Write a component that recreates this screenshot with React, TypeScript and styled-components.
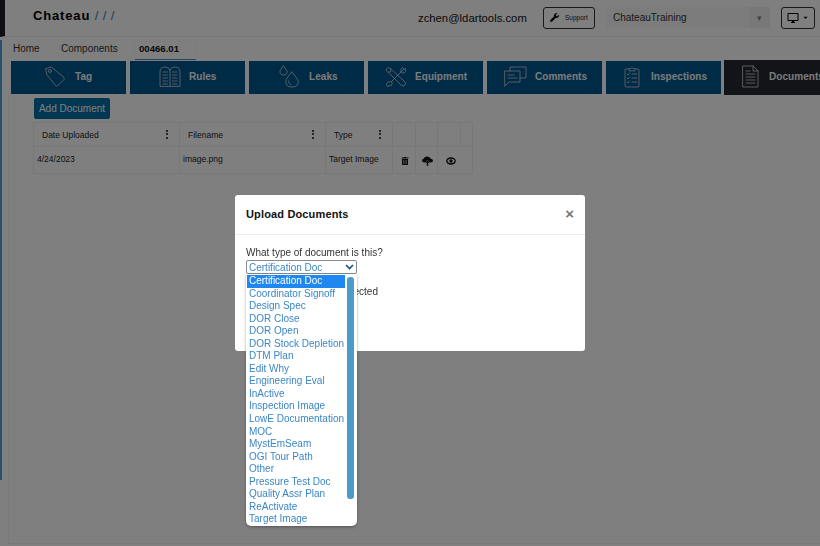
import styled, { createGlobalStyle } from 'styled-components'
import { FaWrench, FaTrashAlt, FaCaretDown } from 'react-icons/fa'
import { MdOutlineDesktopWindows } from 'react-icons/md'
import type { ReactNode } from 'react'

const GlobalStyle = createGlobalStyle`
  html, body { margin: 0; padding: 0; background: #fff; }
  body { font-family: "Liberation Sans", Arial, sans-serif; overflow: hidden; }
  * { box-sizing: border-box; }
`

const Page = styled.div`
  position: relative;
  width: 820px;
  height: 546px;
  overflow: hidden;
  background: #fff;
`

const Header = styled.header`
  display: flex;
  align-items: center;
  height: 37px;
  border-bottom: 1px solid #eee;
  border-left: 5px solid #1a1f2b;
  padding-left: 28px;
`

const Brand = styled.div`
  font-size: 13px;
  font-weight: 700;
  letter-spacing: 0.85px;
  color: #000;
  margin-bottom: 6px;
  width: 385px;
  flex: none;
  span { color: #2f7fb0; font-weight: 400; letter-spacing: 0.4px; }
`

const Email = styled.div`
  font-size: 11.3px;
  color: #111;
  width: 125px;
  flex: none;
`

const SupportButton = styled.div`
  display: flex;
  align-items: center;
  gap: 6px;
  width: 52px;
  height: 22px;
  margin-top: -1px;
  margin-right: 11px;
  padding-left: 6px;
  border: 1px solid #333;
  border-radius: 3px;
  font-size: 6.5px;
  color: #222;
  flex: none;
`

const TenantSelect = styled.div`
  display: flex;
  align-items: center;
  justify-content: space-between;
  width: 164px;
  height: 21px;
  margin-top: -1px;
  margin-right: 11px;
  padding-left: 7px;
  background: #f8f8f8;
  font-size: 10px;
  color: #333;
  flex: none;
`

const TenantCaret = styled.div`
  display: flex;
  align-items: center;
  justify-content: center;
  width: 21px;
  height: 21px;
  background: #f0f0f0;
  color: #888;
  font-size: 9px;
`

const ScreenButton = styled.div`
  display: flex;
  align-items: center;
  justify-content: center;
  gap: 3px;
  width: 34px;
  height: 22px;
  margin-top: -1px;
  border: 1px solid #333;
  border-radius: 3px;
  color: #000;
  flex: none;
`

const Breadcrumbs = styled.div`
  display: flex;
  align-items: flex-end;
  height: 23px;
  padding-left: 13px;
  font-size: 10px;
  color: #333;
`

const Crumb = styled.div<{ $width: number }>`
  width: ${p => p.$width}px;
  padding-bottom: 6px;
  flex: none;
`

const ActiveCrumb = styled.div`
  width: 61px;
  height: 18px;
  padding: 1px 0 0 4px;
  border-bottom: 1px solid #3c8dbc;
  background: #fff;
  box-shadow: 0 0 1px #ddd;
  font-weight: 700;
  font-size: 9.6px;
  color: #111;
  flex: none;
  align-self: flex-end;
`

const NavRow = styled.nav`
  display: flex;
  gap: 4px;
  padding-left: 11px;
  height: 35px;
`

const NavTab = styled.div<{ $active?: boolean; $gap: number; $iconLeft: number }>`
  display: flex;
  align-items: center;
  gap: ${p => p.$gap}px;
  flex: none;
  width: ${p => (p.$active ? 120 : 115)}px;
  height: ${p => (p.$active ? 35 : 33)}px;
  margin-top: ${p => (p.$active ? 0 : 1)}px;
  margin-left: ${p => (p.$active ? -1 : 0)}px;
  padding-left: ${p => p.$iconLeft}px;
  padding-bottom: ${p => (p.$active ? 3 : 2)}px;
  background: ${p => (p.$active ? '#25282f' : '#00568f')};
  color: #f4f6f8;
  font-size: 10px;
  font-weight: 700;
  letter-spacing: 0.05px;
  white-space: nowrap;
  overflow: hidden;
  svg { flex: none; }
`

const Content = styled.main`
  height: 449px;
  margin-left: 8px;
  padding: 3px 0 0 25px;
  border-left: 1px solid #f2f2f2;
  border-bottom: 1px solid #f2f2f2;
`

const AddButton = styled.div`
  display: flex;
  align-items: center;
  justify-content: center;
  width: 76px;
  height: 21px;
  margin-left: 0;
  background: #0070a8;
  border-radius: 2px;
  color: #fff;
  font-size: 10px;
`

const Table = styled.div`
  width: 440px;
  margin-top: 3px;
  margin-left: -1px;
  border: 1px solid #f0f0f0;
  font-size: 8.5px;
  color: #222;
`

const TableRow = styled.div<{ $height: number; $head?: boolean }>`
  display: grid;
  grid-template-columns: 146px 146px 67px 23px 22px 23px 1fr;
  height: ${p => p.$height}px;
  ${p => (p.$head ? 'border-bottom: 1px solid #f0f0f0;' : '')}
`

const HeadCell = styled.div<{ $pad?: number }>`
  display: flex;
  align-items: center;
  justify-content: space-between;
  padding: 0 ${p => p.$pad ?? 11}px 0 8px;
  border-right: 1px solid #f0f0f0;
  &:last-child { border-right: none; }
`

const BodyCell = styled.div<{ $center?: boolean; $bare?: boolean }>`
  display: flex;
  align-items: center;
  justify-content: ${p => (p.$center ? 'center' : 'flex-start')};
  padding-left: ${p => (p.$center ? 2 : 3)}px;
  padding-bottom: ${p => (p.$center ? 0 : 2)}px;
  padding-top: ${p => (p.$center ? 2 : 0)}px;
  ${p => (p.$bare ? '' : 'border-right: 1px solid #f0f0f0;')}
`

const Dots = styled.div`
  display: flex;
  flex-direction: column;
  gap: 1.5px;
  margin-top: -1px;
  i { width: 2px; height: 2px; border-radius: 50%; background: #111; display: block; }
`

const LeftRail = styled.div`
  position: absolute;
  left: 0;
  top: 40px;
  width: 2px;
  height: 440px;
  background: #4ea5dc;
`

const Backdrop = styled.div`
  position: fixed;
  inset: 0;
  background: rgba(0, 0, 0, 0.5);
`

const Modal = styled.section`
  position: absolute;
  left: 235px;
  top: 195px;
  width: 350px;
  height: 156px;
  background: #fff;
  border-radius: 3px;
`

const ModalHeader = styled.div`
  display: flex;
  align-items: center;
  justify-content: space-between;
  height: 40px;
  padding: 0 11px 2px;
  border-bottom: 1px solid #e9ecef;
`

const ModalTitle = styled.h2`
  margin: 0;
  font-size: 11px;
  font-weight: 700;
  letter-spacing: 0.15px;
  color: #111;
`

const CloseMark = styled.div`
  font-size: 15px;
  font-weight: 700;
  line-height: 1;
  color: #777;
`

const ModalBody = styled.div`
  position: relative;
  padding: 10px 11px 0;
  font-size: 10px;
  color: #333;
`

const Question = styled.div`
  line-height: 15px;
`

const SelectBox = styled.div`
  display: flex;
  align-items: center;
  justify-content: space-between;
  width: 111px;
  height: 14px;
  padding: 0 2px;
  border: 1px solid #8a8a8a;
  border-radius: 2px;
  color: #3a86c8;
`

const FileNote = styled.div`
  margin-top: 11px;
  width: 132px;
  text-align: right;
  color: #333;
  line-height: 14px;
`

const DropList = styled.ul`
  position: absolute;
  left: 246px;
  top: 274px;
  width: 111px;
  height: 252px;
  margin: 0;
  padding: 1px 0 0 1px;
  list-style: none;
  background: #fff;
  border-radius: 0 3px 5px 5px;
  box-shadow: 0 1px 3px rgba(0, 0, 0, 0.35);
`

const DropItem = styled.li<{ $selected?: boolean }>`
  width: 98px;
  height: 12.55px;
  padding-left: 2px;
  font-size: 10px;
  line-height: 12px;
  white-space: nowrap;
  color: ${p => (p.$selected ? '#fff' : '#3a86c8')};
  background: ${p => (p.$selected ? '#1e88f0' : 'transparent')};
`

const DropThumb = styled.div`
  position: absolute;
  left: 101px;
  top: 3px;
  width: 7px;
  height: 222px;
  border-radius: 3px;
  background: #4b9cc9;
`

const Line = (props: { children: ReactNode; w: number; h: number }) => (
  <svg
    width={props.w}
    height={props.h}
    viewBox={`0 0 ${props.w} ${props.h}`}
    fill="none"
    stroke="#bcc7d0"
    strokeWidth={0.9}
    strokeLinejoin="round"
    strokeLinecap="round"
  >
    {props.children}
  </svg>
)

const TagIcon = () => (
  <Line w={20} h={21}>
    <path d="M1 2.5 L6.5 1 L19 11.5 Q19.5 12.5 19 13.5 L12.5 20 Q11.5 20.5 10.5 19.5 L2 9 Z" />
    <circle cx="5" cy="5" r="1.5" />
  </Line>
)

const RulesIcon = () => (
  <Line w={22} h={21}>
    <path d="M1 20 V6 Q1 1 6 1 Q10.5 1 11 4.5 Q11.5 1 16 1 Q21 1 21 6 V20 Z" />
    <path d="M11 4.5 V20" />
    <path d="M4 6 H8.5 M4 9 H8.5 M4 12 H8.5 M4 15 H8.5 M4 18 H8.5 M13.5 6 H18 M13.5 9 H18 M13.5 12 H18 M13.5 15 H18 M13.5 18 H18" strokeDasharray="3 1" />
  </Line>
)

const LeaksIcon = () => (
  <Line w={21} h={23}>
    <path d="M4.5 1 L8 6 Q8.5 10 4.5 10 Q0.5 10 1 6 Z" />
    <path d="M13 7 L19 15 Q20.5 22 13 22 Q5.5 22 7 15 Z" />
    <path d="M9.5 16 Q9.5 19 12 20" />
  </Line>
)

const EquipmentIcon = () => (
  <Line w={22} h={22}>
    <path d="M3 6 L16 19 Q18 21 20 19 Q21.5 17 19 15 L6 3" />
    <path d="M1 4 L3 1.5 L6 3 L5.5 6 L3 6 Z" />
    <path d="M19 3 L6 16 Q3 15 1.5 17.5 Q1 20 3 21 L4.5 19 L6 20 Q8 18 7 16" />
    <path d="M16 6 Q15 3 17.5 1.5 L19 3.5 L20.5 2.5 Q21.5 6 19 7 Q17 7.5 16 6 Z" />
  </Line>
)

const CommentsIcon = () => (
  <Line w={23} h={21}>
    <path d="M1 5 H16 V16 H5 L1 20 Z" />
    <path d="M6 5 V1 H22 V12 H16" />
    <path d="M4 9 H10 M4 12 H13" />
  </Line>
)

const InspectionsIcon = () => (
  <Line w={16} h={22}>
    <path d="M4.5 3 H1.5 Q1 3 1 4 V20 Q1 21 2 21 H14 Q15 21 15 20 V4 Q15 3 14 3 H11.5" />
    <path d="M5 4.5 V2.5 H7 Q8 0.5 9 2.5 H11 V4.5 Z" />
    <path d="M3 8 L4 9 L5.5 7 M3 12 L4 13 L5.5 11 M3 16 L4 17 L5.5 15 M8 8 H13 M8 12 H13 M8 16 H13" />
  </Line>
)

const DocumentsIcon = () => (
  <Line w={17} h={23}>
    <path d="M1 1 H11 L16 6 V22 H1 Z" />
    <path d="M11 1 V6 H16" />
    <path d="M4 6 H8 M4 9 H13 M4 12 H13 M4 15 H13 M4 18 H13" />
  </Line>
)

const tabs = [
  { label: 'Tag', icon: <TagIcon />, gap: 10, left: 34 },
  { label: 'Rules', icon: <RulesIcon />, gap: 8, left: 29 },
  { label: 'Leaks', icon: <LeaksIcon />, gap: 9, left: 30 },
  { label: 'Equipment', icon: <EquipmentIcon />, gap: 8, left: 17 },
  { label: 'Comments', icon: <CommentsIcon />, gap: 8, left: 17 },
  { label: 'Inspections', icon: <InspectionsIcon />, gap: 11, left: 18 },
]

const docTypes = [
  'Certification Doc', 'Coordinator Signoff', 'Design Spec', 'DOR Close', 'DOR Open',
  'DOR Stock Depletion', 'DTM Plan', 'Edit Why', 'Engineering Eval', 'InActive',
  'Inspection Image', 'LowE Documentation', 'MOC', 'MystEmSeam', 'OGI Tour Path',
  'Other', 'Pressure Test Doc', 'Quality Assr Plan', 'ReActivate', 'Target Image',
]

const CloudDownIcon = () => (
  <svg width="11" height="10" viewBox="0 0 11 10" fill="#111">
    <path d="M2.5 6.5 Q0 6.5 0 4.6 Q0 3 1.8 2.8 Q2.4 0.5 5 0.5 Q7.6 0.5 8.4 2.6 Q11 2.8 11 4.7 Q11 6.5 8.5 6.5 Z" />
    <path d="M5.5 4 L3.2 7 H4.6 V10 H6.4 V7 H7.8 Z" stroke="#fff" strokeWidth="0.4" />
  </svg>
)

const EyeIcon = () => (
  <svg width="10" height="8" viewBox="0 0 10 8" fill="none" stroke="#111" strokeWidth="1.3">
    <ellipse cx="5" cy="4" rx="4.2" ry="3" />
    <circle cx="5" cy="4" r="1" fill="#111" />
  </svg>
)

const Chevron = () => (
  <svg width="9" height="6" viewBox="0 0 9 6" fill="none" stroke="#1c4f80" strokeWidth="1.6">
    <path d="M1 1 L4.5 4.5 L8 1" />
  </svg>
)

const App = () => {
  return (
    <Page>
      <GlobalStyle />
      <Header>
        <Brand>Chateau <span>/ / /</span></Brand>
        <Email>zchen@ldartools.com</Email>
        <SupportButton><FaWrench size={9} color="#111" />Support</SupportButton>
        <TenantSelect>ChateauTraining<TenantCaret>▾</TenantCaret></TenantSelect>
        <ScreenButton><MdOutlineDesktopWindows size={12} /><FaCaretDown size={7} /></ScreenButton>
      </Header>
      <Breadcrumbs>
        <Crumb $width={48}>Home</Crumb>
        <Crumb $width={74}>Components</Crumb>
        <ActiveCrumb>00466.01</ActiveCrumb>
      </Breadcrumbs>
      <NavRow>
        {tabs.map(t => (
          <NavTab key={t.label} $gap={t.gap} $iconLeft={t.left}>{t.icon}{t.label}</NavTab>
        ))}
        <NavTab $active $gap={10} $iconLeft={18}><DocumentsIcon />Documents</NavTab>
      </NavRow>
      <Content>
        <AddButton>Add Document</AddButton>
        <Table>
          <TableRow $height={24} $head>
            <HeadCell>Date Uploaded<Dots><i /><i /><i /></Dots></HeadCell>
            <HeadCell>Filename<Dots><i /><i /><i /></Dots></HeadCell>
            <HeadCell>Type<Dots><i /><i /><i /></Dots></HeadCell>
            <HeadCell />
            <HeadCell />
            <HeadCell />
            <HeadCell />
          </TableRow>
          <TableRow $height={26}>
            <BodyCell>4/24/2023</BodyCell>
            <BodyCell>image.png</BodyCell>
            <BodyCell>Target Image</BodyCell>
            <BodyCell $center><FaTrashAlt size={8} color="#111" /></BodyCell>
            <BodyCell $center><CloudDownIcon /></BodyCell>
            <BodyCell $center $bare><EyeIcon /></BodyCell>
            <BodyCell $bare />
          </TableRow>
        </Table>
      </Content>
      <LeftRail />
      <Backdrop />
      <Modal>
        <ModalHeader>
          <ModalTitle>Upload Documents</ModalTitle>
          <CloseMark>×</CloseMark>
        </ModalHeader>
        <ModalBody>
          <Question>What type of document is this?</Question>
          <SelectBox>Certification Doc<Chevron /></SelectBox>
          <FileNote>No file selected</FileNote>
        </ModalBody>
      </Modal>
      <DropList>
        {docTypes.map((d, i) => (
          <DropItem key={d} $selected={i === 0}>{d}</DropItem>
        ))}
        <DropThumb />
      </DropList>
    </Page>
  )
}

export default App
